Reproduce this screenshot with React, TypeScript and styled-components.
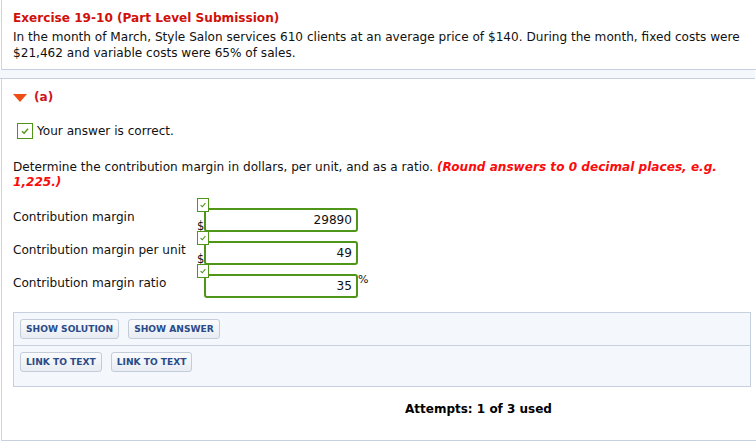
import React, { FC } from 'react'
import styled, { createGlobalStyle } from 'styled-components'

const GlobalStyle = createGlobalStyle`
  html, body {
    margin: 0;
    padding: 0;
    background: #fff;
    overflow: hidden;
  }
  body {
    font-family: Verdana, "DejaVu Sans", sans-serif;
    color: #111;
  }
`

const Page = styled.div`
  width: 756px;
  height: 441px;
  overflow: hidden;
`

const IntroCard = styled.section`
  margin-left: 1px;
  width: 780px;
  border-left: 1px solid #cdd6e2;
  border-bottom: 1px solid #c6d0de;
  padding: 10px 12px 8px 11px;
  box-sizing: border-box;
`

const Title = styled.h1`
  margin: 0 0 2px;
  font-size: 12.1px;
  line-height: 17px;
  font-weight: bold;
  color: #d0100a;
`

const Body = styled.p`
  margin: 0;
  font-size: 12.1px;
  line-height: 16px;
  width: 740px;
`

const Band = styled.div`
  width: 755px;
  height: 8px;
  background: #f4f7fb;
  border-bottom: 1px solid #c6d0de;
`

const PartCard = styled.section`
  margin-left: 1px;
  width: 780px;
  height: 362px;
  border-left: 1px solid #cdd6e2;
  border-bottom: 1px solid #c6d0de;
  padding: 10px 0 0 11px;
  box-sizing: border-box;
`

const PartHeader = styled.div`
  display: flex;
  align-items: center;
  gap: 7px;
  height: 16px;
  font-size: 12.1px;
  font-weight: bold;
  color: #c8161e;
`

const Triangle = styled.span`
  display: inline-block;
  width: 0;
  height: 0;
  border-left: 7px solid transparent;
  border-right: 7px solid transparent;
  border-top: 8px solid #ee4d14;
  margin-top: 2px;
`

const Status = styled.div`
  display: flex;
  align-items: center;
  gap: 4px;
  margin: 18px 0 0 4px;
  font-size: 12.1px;
  line-height: 16px;
`

const CheckBox = styled.span<{ $size: number }>`
  display: inline-flex;
  align-items: center;
  justify-content: center;
  width: ${p => p.$size}px;
  height: ${p => p.$size}px;
  box-sizing: border-box;
  border: 1px solid #4f9618;
  background: #fff;
`

const Prompt = styled.p`
  margin: 21px 0 0;
  width: 720px;
  font-size: 12.1px;
  line-height: 15px;
`

const Hint = styled.em`
  color: #fa0c0c;
  font-weight: bold;
`

const Rows = styled.div`
  margin-top: 18px;
  display: flex;
  flex-direction: column;
  gap: 9px;
`

const Row = styled.div`
  display: flex;
  align-items: flex-start;
  height: 24px;
`

const Label = styled.span`
  width: 184px;
  padding-top: 1px;
  font-size: 12.1px;
  line-height: 16px;
  white-space: nowrap;
`

const Field = styled.div`
  position: relative;
  display: flex;
  align-items: flex-end;
  height: 24px;
`

const Unit = styled.span`
  width: 7px;
  font-size: 11.5px;
  line-height: 14px;
  margin-bottom: -1px;
`

const Input = styled.div`
  width: 154px;
  height: 24px;
  box-sizing: border-box;
  border: 2px solid #4f9618;
  border-radius: 3px;
  padding: 0 4px 1px 0;
  display: flex;
  align-items: flex-end;
  justify-content: flex-end;
  font-size: 12.1px;
  line-height: 18px;
  color: #111;
  background: #fff;
`

const Badge = styled(CheckBox)`
  position: absolute;
  left: 0;
  top: -10px;
  width: 12px;
  height: 14px;
`

const Suffix = styled.span`
  font-size: 11px;
  line-height: 12px;
  align-self: flex-start;
  margin-left: 0;
`

const Panel = styled.div`
  margin-top: 14px;
  width: 738px;
  box-sizing: border-box;
  border: 1px solid #c6d0de;
  background: #f4f7fb;
`

const ButtonRow = styled.div<{ $last?: boolean }>`
  display: flex;
  gap: 9px;
  padding: ${p => (p.$last ? '6px 6px 14px' : '6px 6px 6px')};
  border-top: ${p => (p.$last ? '1px solid #c6d0de' : 'none')};
`

const Button = styled.button`
  height: 20px;
  padding: 0 5px;
  border: 1px solid #c3ccd8;
  border-radius: 3px;
  background: linear-gradient(#fafbfd, #e8edf3);
  font-family: Verdana, "DejaVu Sans", sans-serif;
  font-size: 9.1px;
  font-weight: bold;
  color: #2b4b88;
  cursor: pointer;
`

const Attempts = styled.div`
  margin: 15px 0 0 392px;
  font-size: 12px;
  font-weight: bold;
  line-height: 14px;
  color: #000;
`

const Tick: FC<{ size?: number }> = ({ size = 10 }) => (
  <svg width={size} height={size} viewBox="0 0 10 10">
    <path d="M2 5.2 L4.1 7.2 L8 2.8" fill="none" stroke="#4f9618" strokeWidth="1.4" />
  </svg>
)

type RowData = { label: string; value: string; unit?: string; suffix?: string }

const rows: RowData[] = [
  { label: 'Contribution margin', value: '29890', unit: '$' },
  { label: 'Contribution margin per unit', value: '49', unit: '$' },
  { label: 'Contribution margin ratio', value: '35', suffix: '%' },
]

const AnswerRow: FC<RowData> = ({ label, value, unit, suffix }) => (
  <Row>
    <Label>{label}</Label>
    <Field>
      <Unit>{unit}</Unit>
      <Input>{value}</Input>
      <Badge $size={12}>
        <Tick size={8} />
      </Badge>
      {suffix && <Suffix>{suffix}</Suffix>}
    </Field>
  </Row>
)

export default function App() {
  return (
    <Page>
      <GlobalStyle />
      <IntroCard>
        <Title>Exercise 19-10 (Part Level Submission)</Title>
        <Body>
          In the month of March, Style Salon services 610 clients at an average price of $140. During the month, fixed
          costs were $21,462 and variable costs were 65% of sales.
        </Body>
      </IntroCard>
      <Band />
      <PartCard>
        <PartHeader>
          <Triangle />
          (a)
        </PartHeader>
        <Status>
          <CheckBox $size={16}>
            <Tick />
          </CheckBox>
          Your answer is correct.
        </Status>
        <Prompt>
          Determine the contribution margin in dollars, per unit, and as a ratio.{' '}
          <Hint>(Round answers to 0 decimal places, e.g. 1,225.)</Hint>
        </Prompt>
        <Rows>
          {rows.map(r => (
            <AnswerRow key={r.label} {...r} />
          ))}
        </Rows>
        <Panel>
          <ButtonRow>
            <Button>SHOW SOLUTION</Button>
            <Button>SHOW ANSWER</Button>
          </ButtonRow>
          <ButtonRow $last>
            <Button>LINK TO TEXT</Button>
            <Button>LINK TO TEXT</Button>
          </ButtonRow>
        </Panel>
        <Attempts>Attempts: 1 of 3 used</Attempts>
      </PartCard>
    </Page>
  )
}
